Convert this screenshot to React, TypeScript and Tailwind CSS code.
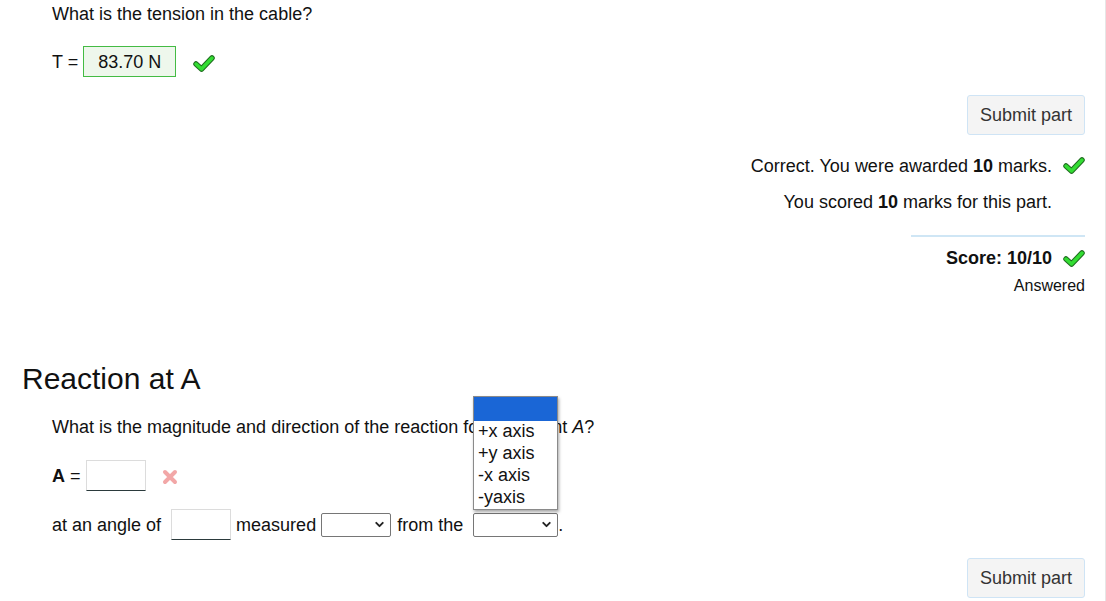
import { ChevronDown } from 'lucide-react';

function Tick() {
  return (
    <svg width="22" height="17" viewBox="0 0 22 17" className="inline-block">
      <path d="M3 9 L8.5 14 L19 3" fill="none" stroke="#1f6b1f" strokeWidth="5.5" strokeLinecap="round" strokeLinejoin="round" />
      <path d="M3 9 L8.5 14 L19 3" fill="none" stroke="#33dd33" strokeWidth="3.5" strokeLinecap="round" strokeLinejoin="round" />
    </svg>
  );
}

function Cross() {
  return (
    <svg width="16" height="16" viewBox="0 0 16 16" className="inline-block">
      <path d="M3 3 L13 13 M13 3 L3 13" stroke="#f2a7a7" strokeWidth="4" strokeLinecap="round" />
    </svg>
  );
}

function SubmitButton() {
  return (
    <button className="h-[40px] w-[118px] rounded-[3px] border border-[#cfe4f5] bg-[#f4f4f4] text-[18px] text-[#333]">
      Submit part
    </button>
  );
}

function TextBox({ width }: { width: string }) {
  return <div className={`${width} h-[31px] border border-[#dcdcdc] border-b-[#2b3a3c] bg-white`} />;
}

function Select({ width }: { width: string }) {
  return (
    <div className={`${width} h-[24px] border border-[#767676] rounded-[2px] flex items-center justify-end pr-[4px] bg-white`}>
      <ChevronDown size={13} strokeWidth={3.5} color="#222" />
    </div>
  );
}

export default function App() {
  const options = ['+x axis', '+y axis', '-x axis', '-yaxis'];

  return (
    <div
      className="relative w-[1106px] h-[601px] overflow-hidden bg-white border-r border-[#e6e6e6] text-[18px] leading-[24px] text-[#111]"
      style={{ fontFamily: '"Liberation Sans", Arial, sans-serif' }}
    >
      {/* Part: tension */}
      <div className="pl-[52px] pt-[2px]">
        <p>What is the tension in the cable?</p>
        <div className="mt-[20px] flex items-center">
          <span className="mr-[5px]">T =</span>
          <div className="h-[31px] w-[93px] border border-[#44bb44] bg-[#eef7ec] flex items-center pl-[14px]">
            83.70 N
          </div>
          <span className="ml-[17px] mt-[1px]"><Tick /></span>
        </div>
      </div>

      <div className="flex flex-col items-end pr-[20px]">
        <div className="mt-[18px]"><SubmitButton /></div>
        <div className="mt-[19px] flex items-center">
          <span>Correct. You were awarded <b>10</b> marks.</span>
          <span className="ml-[11px] -mt-[4px]"><Tick /></span>
        </div>
        <div className="mt-[12px] mr-[33px]">
          You scored <b>10</b> marks for this part.
        </div>
        <div className="mt-[21px] w-[174px] h-[2px] bg-[#cfe6f5]" />
        <div className="mt-[9px] flex items-center font-bold">
          <span>Score: 10/10</span>
          <span className="ml-[11px] -mt-[2px] font-normal"><Tick /></span>
        </div>
        <div className="mt-[6px] text-[16px] leading-[20px]">Answered</div>
      </div>

      {/* Part: reaction */}
      <h2 className="mt-[65px] pl-[22px] text-[30px] leading-[36px]">Reaction at A</h2>
      <div className="pl-[52px]">
        <p className="mt-[18px]">
          What is the magnitude and direction of the reaction force at point <i>A</i>?
        </p>
        <div className="mt-[21px] flex items-center">
          <span className="mr-[5px]"><b>A</b> =</span>
          <TextBox width="w-[60px]" />
          <span className="ml-[16px]"><Cross /></span>
        </div>
        <div className="mt-[18px] flex items-center">
          <span className="mr-[10px]">at an angle of</span>
          <TextBox width="w-[60px]" />
          <span className="ml-[5px] mr-[5px]">measured</span>
          <Select width="w-[70px]" />
          <span className="ml-[6px] mr-[10px]">from the</span>
          <Select width="w-[85px]" />
          <span>.</span>
        </div>
      </div>

      <div className="mt-[18px] flex justify-end pr-[20px]">
        <SubmitButton />
      </div>

      {/* Open dropdown list */}
      <div className="absolute left-[473px] top-[396px] w-[85px] border border-[#8a8a8a] bg-white shadow-[1px_2px_3px_rgba(0,0,0,0.35)] text-[18px] leading-[22px]">
        <div className="h-[24px] bg-[#1a66d6]" />
        {options.map(o => (
          <div key={o} className="pl-[4px] -mt-[1px] mb-[1px]">{o}</div>
        ))}
      </div>
    </div>
  );
}
